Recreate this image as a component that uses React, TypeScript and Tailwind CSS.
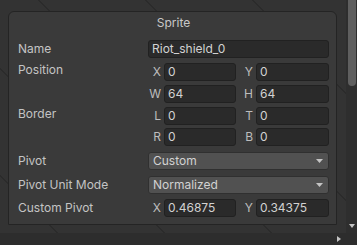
const FONT = { fontFamily: 'Inter, "Noto Sans", sans-serif' }

function Field({ value }: { value: string }) {
  return (
    <div className="h-[18px] bg-[#2a2a2a] border border-[#212121] rounded-[3px] pl-[3px] text-[12px] leading-[16px] text-[#d2d2d2] whitespace-nowrap overflow-hidden">
      {value}
    </div>
  )
}

function Vec({ a, av, b, bv }: { a: string; av: string; b: string; bv: string }) {
  return (
    <div className="grid grid-cols-[16px_72px_20px_73px] h-[18px] items-center">
      <span className="text-right pr-[3px] text-[12px] text-[#bdbdbd]">{a}</span>
      <Field value={av} />
      <span className="text-right pr-[3px] text-[12px] text-[#bdbdbd]">{b}</span>
      <Field value={bv} />
    </div>
  )
}

function Dropdown({ value }: { value: string }) {
  return (
    <div className="h-[18px] bg-[#515151] border border-[#303030] rounded-[3px] pl-[4px] pr-[5px] flex items-center justify-between text-[12px] text-[#d2d2d2]">
      <span className="leading-[16px]">{value}</span>
      <svg width="7" height="4" viewBox="0 0 7 4">
        <path d="M0 0h7L3.5 4z" fill="#c4c4c4" />
      </svg>
    </div>
  )
}

function Row({
  label,
  className = '',
  up = false,
  children,
}: {
  label: string
  className?: string
  up?: boolean
  children: React.ReactNode
}) {
  return (
    <div className={`flex ${className}`}>
      <div
        className={`w-[130px] h-[18px] flex items-center text-[12px] text-[#c4c4c4] whitespace-nowrap ${
          up ? '-mt-[2px]' : ''
        }`}
      >
        {label}
      </div>
      <div className="w-[181px] flex flex-col">{children}</div>
    </div>
  )
}

export default function App() {
  return (
    <div className="w-[357px] h-[245px] flex flex-col bg-[#333333] overflow-hidden" style={FONT}>
      <div className="flex-1 flex min-h-0">
        {/* Inspector area */}
        <div className="flex-1 pl-[8px] pt-[11px] bg-[repeating-linear-gradient(45deg,transparent_0_40px,#2b2b2b_40px_41.2px,transparent_41.2px_75.66px)]">
          <div className="w-[329px] h-[214px] bg-[#3a3a3a] border border-[#242424] rounded-t-[6px] pl-[9px] pr-[7px] flex flex-col">
            <div className="h-[21px] flex items-center justify-center text-[12px] text-[#c8c8c8]">Sprite</div>

            <Row label="Name" className="mt-[7px]">
              <Field value="Riot_shield_0" />
            </Row>

            <Row label="Position" className="mt-[5px]" up>
              <Vec a="X" av="0" b="Y" bv="0" />
              <div className="mt-[4px]">
                <Vec a="W" av="64" b="H" bv="64" />
              </div>
            </Row>

            <Row label="Border" className="mt-[4px]" up>
              <Vec a="L" av="0" b="T" bv="0" />
              <div className="mt-[3px]">
                <Vec a="R" av="0" b="B" bv="0" />
              </div>
            </Row>

            <Row label="Pivot" className="mt-[6px]">
              <Dropdown value="Custom" />
            </Row>

            <Row label="Pivot Unit Mode" className="mt-[6px]">
              <Dropdown value="Normalized" />
            </Row>

            <Row label="Custom Pivot" className="mt-[5px]">
              <Vec a="X" av="0.46875" b="Y" bv="0.34375" />
            </Row>
          </div>
        </div>

        {/* Vertical scrollbar */}
        <div className="w-[11px] bg-[#2e2e2e] flex flex-col">
          <div className="ml-[2px] w-[8px] h-[86px] bg-[#5f5f5f] rounded-b-[4px]" />
          <div className="mt-auto mb-[5px] flex justify-center">
            <svg width="6" height="4" viewBox="0 0 6 4">
              <path d="M0 0h6L3 4z" fill="#c4c4c4" />
            </svg>
          </div>
        </div>
      </div>

      {/* Horizontal scrollbar */}
      <div className="h-[12px] bg-[#2d2d2d] flex items-center justify-end pr-[16px]">
        <svg width="4" height="6" viewBox="0 0 4 6">
          <path d="M0 0v6l4-3z" fill="#c4c4c4" />
        </svg>
      </div>
    </div>
  )
}
